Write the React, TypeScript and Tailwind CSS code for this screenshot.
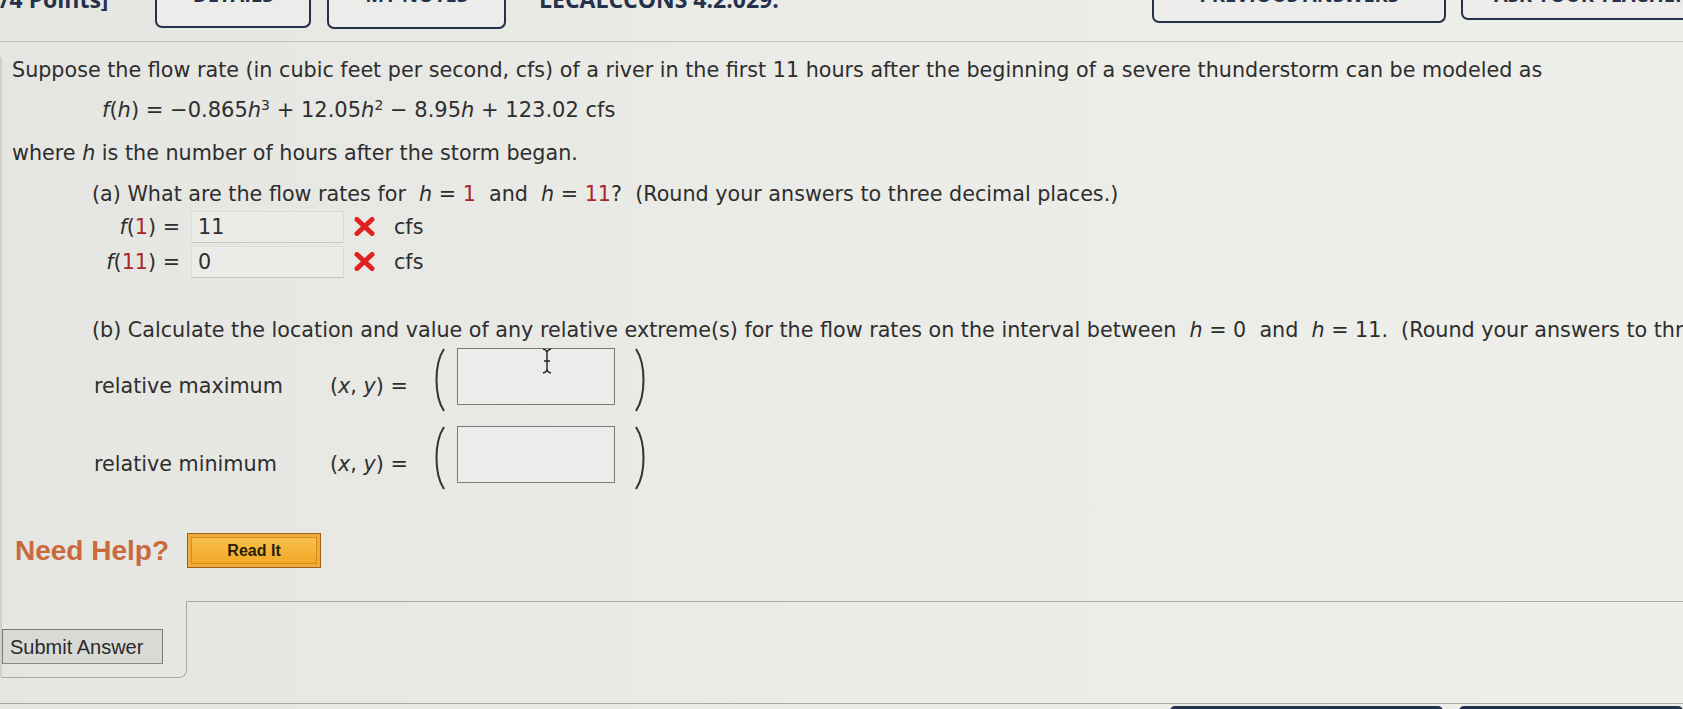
import React from "react";

const red = "text-[#a8262b]";

function RedX() {
  return (
    <svg width="21" height="19" viewBox="0 0 21 19" className="shrink-0">
      <path d="M3 2.5 L18 16.5 M18 2.5 L3 16.5" stroke="#e2201e" strokeWidth="5" strokeLinecap="round" />
    </svg>
  );
}

function Paren({ right }: { right?: boolean }) {
  return (
    <svg width="18" height="64" viewBox="0 0 18 64" className="shrink-0">
      <path
        d={right ? "M4 1 C14 16 14 48 4 63" : "M14 1 C4 16 4 48 14 63"}
        stroke="#333"
        strokeWidth="2"
        fill="none"
      />
    </svg>
  );
}

function TopButton({ label, w, h, ml }: { label: string; w: string; h: string; ml: string }) {
  return (
    <div className={`${w} ${h} ${ml} shrink-0 overflow-hidden rounded-b-[7px] border-[2.5px] border-t-0 border-[#24314b] bg-[#ececea]`}>
      <span className="-mt-[15px] block text-center font-['Open_Sans',sans-serif] text-[20px] font-bold leading-[20px] text-[#24314b]">
        {label}
      </span>
    </div>
  );
}

function Field({ value }: { value: string }) {
  return (
    <div className="ml-[11px] flex h-[32px] w-[153px] items-center border border-[#dcdcd8] border-b-[#c6c6c2] bg-[#ebebe7] pl-[6px]">
      {value}
    </div>
  );
}

function Extreme({ label, cursor }: { label: string; cursor?: boolean }) {
  return (
    <div className="flex h-[64px] items-end">
      <span className="w-[328px] shrink-0 pb-[13px] pl-[92px]">{label}</span>
      <span className="w-[100px] shrink-0 pb-[13px]">
        (<i>x</i>, <i>y</i>) =
      </span>
      <Paren />
      <div className="relative ml-[9px] h-[57px] w-[158px] shrink-0 self-start border-[1.5px] border-[#7a7a78] bg-[#ececea]">
        {cursor && (
          <svg width="12" height="26" viewBox="0 0 12 26" className="absolute left-[83px] top-[-1px]">
            <path d="M2 1 Q6 2 6 5 L6 21 Q6 24 2 25 M10 1 Q6 2 6 5 M6 21 Q6 24 10 25 M3 13 L9 13" stroke="#222" strokeWidth="1.4" fill="none" />
          </svg>
        )}
      </div>
      <div className="ml-[17px]">
        <Paren right />
      </div>
    </div>
  );
}

export default function App() {
  return (
    <div className="relative h-[709px] w-[1683px] overflow-hidden whitespace-nowrap bg-gradient-to-r from-[#e5e5e1] via-[#ebebe7] to-[#eeeeea] font-['DejaVu_Sans',sans-serif] text-[20.7px] leading-[26px] text-[#2e2e2e]">
      {/* header strip, mostly scrolled off */}
      <div className="flex h-[42px] items-start border-b border-[#c2c2be]">
        <div className="h-[11px] w-[121px] shrink-0 overflow-hidden">
          <span className="-mt-[13px] block font-['Open_Sans',sans-serif] text-[23px] font-bold leading-[24px] text-[#24314b]">/4 Points]</span>
        </div>
        <TopButton label="DETAILS" w="w-[156px]" h="h-[28px]" ml="ml-[34px]" />
        <TopButton label="MY NOTES" w="w-[179px]" h="h-[29px]" ml="ml-[16px]" />
        <div className="ml-[33px] h-[11px] w-[300px] shrink-0 overflow-hidden">
          <span className="-mt-[13px] block font-['Open_Sans',sans-serif] text-[23px] font-bold leading-[24px] text-[#24314b]">LECALCCONS 4.2.029.</span>
        </div>
        <TopButton label="PREVIOUS ANSWERS" w="w-[294px]" h="h-[23px]" ml="ml-[313px]" />
        <TopButton label="ASK YOUR TEACHER" w="w-[260px]" h="h-[20px]" ml="ml-[15px]" />
      </div>

      <div className="border-l-2 border-[#cfcfcb]">
        <p className="mt-[15px] pl-[10px]">
          Suppose the flow rate (in cubic feet per second, cfs) of a river in the first 11 hours after the beginning of a severe thunderstorm can be modeled as
        </p>
        <p className="mt-[14px] pl-[100px] text-[21px]">
          <i>f</i>(<i>h</i>) = −0.865<i>h</i>
          <sup className="text-[14px]">3</sup> + 12.05<i>h</i>
          <sup className="text-[14px]">2</sup> − 8.95<i>h</i> + 123.02 cfs
        </p>
        <p className="mt-[17px] pl-[10px]">
          where <i>h</i> is the number of hours after the storm began.
        </p>

        <p className="mt-[15px] pl-[90px]">
          (a) What are the flow rates for&nbsp; <i>h</i> = <span className={red}>1</span>&nbsp; and&nbsp; <i>h</i> ={" "}
          <span className={red}>11</span>? &nbsp;(Round your answers to three decimal places.)
        </p>
        <div className="mt-[3px] flex h-[33px] items-center">
          <span className="w-[178px] shrink-0 text-right">
            <i>f</i>(<span className={red}>1</span>) =
          </span>
          <Field value="11" />
          <div className="ml-[10px]">
            <RedX />
          </div>
          <span className="ml-[19px]">cfs</span>
        </div>
        <div className="mt-[2px] flex h-[33px] items-center">
          <span className="w-[178px] shrink-0 text-right">
            <i>f</i>(<span className={red}>11</span>) =
          </span>
          <Field value="0" />
          <div className="ml-[10px]">
            <RedX />
          </div>
          <span className="ml-[19px]">cfs</span>
        </div>

        <p className="mt-[39px] pl-[90px]">
          (b) Calculate the location and value of any relative extreme(s) for the flow rates on the interval between&nbsp; <i>h</i> = 0&nbsp; and&nbsp; <i>h</i> = 11. &nbsp;(Round your answers to three decimal places.)
        </p>
        <div className="mt-[5px]">
          <Extreme label="relative maximum" cursor />
        </div>
        <div className="mt-[14px]">
          <Extreme label="relative minimum" />
        </div>

        <div className="mt-[43px] flex h-[35px] items-center font-['Liberation_Sans',Arial,sans-serif]">
          <span className="ml-[13px] text-[28px] font-bold text-[#c96a3d]">Need Help?</span>
          <button className="ml-[18px] h-[35px] w-[134px] border border-[#9a6218] bg-[#eeac3a] p-[3px]">
            <span className="flex h-full w-full items-center justify-center border border-[#d98a1a] bg-gradient-to-b from-[#f8c14a] to-[#f2a824] text-[16px] font-bold text-[#2a1d0a]">
              Read It
            </span>
          </button>
        </div>

        <div className="mt-[33px] flex h-[77px] items-start">
          <div className="h-[77px] w-[185px] shrink-0 rounded-br-[8px] border-r border-b border-[#a9a9a5] pt-[28px]">
            <button className="h-[35px] w-[161px] border border-[#777] border-b-[#888] bg-[#d9d9d6] pl-[7px] text-left font-['Liberation_Sans',Arial,sans-serif] text-[20px] text-[#2a2a2a]">
              Submit Answer
            </button>
          </div>
          <div className="h-full flex-1 border-t border-[#a9a9a5]" />
        </div>
      </div>

      <div className="mt-[25px] flex h-[10px] items-start border-t border-[#a9a9a5]">
        <div className="ml-[1170px] mt-[2px] h-[8px] w-[273px] rounded-t-[5px] bg-[#24314b]" />
        <div className="ml-[16px] mt-[2px] h-[8px] flex-1 rounded-t-[5px] bg-[#24314b]" />
      </div>
    </div>
  );
}
